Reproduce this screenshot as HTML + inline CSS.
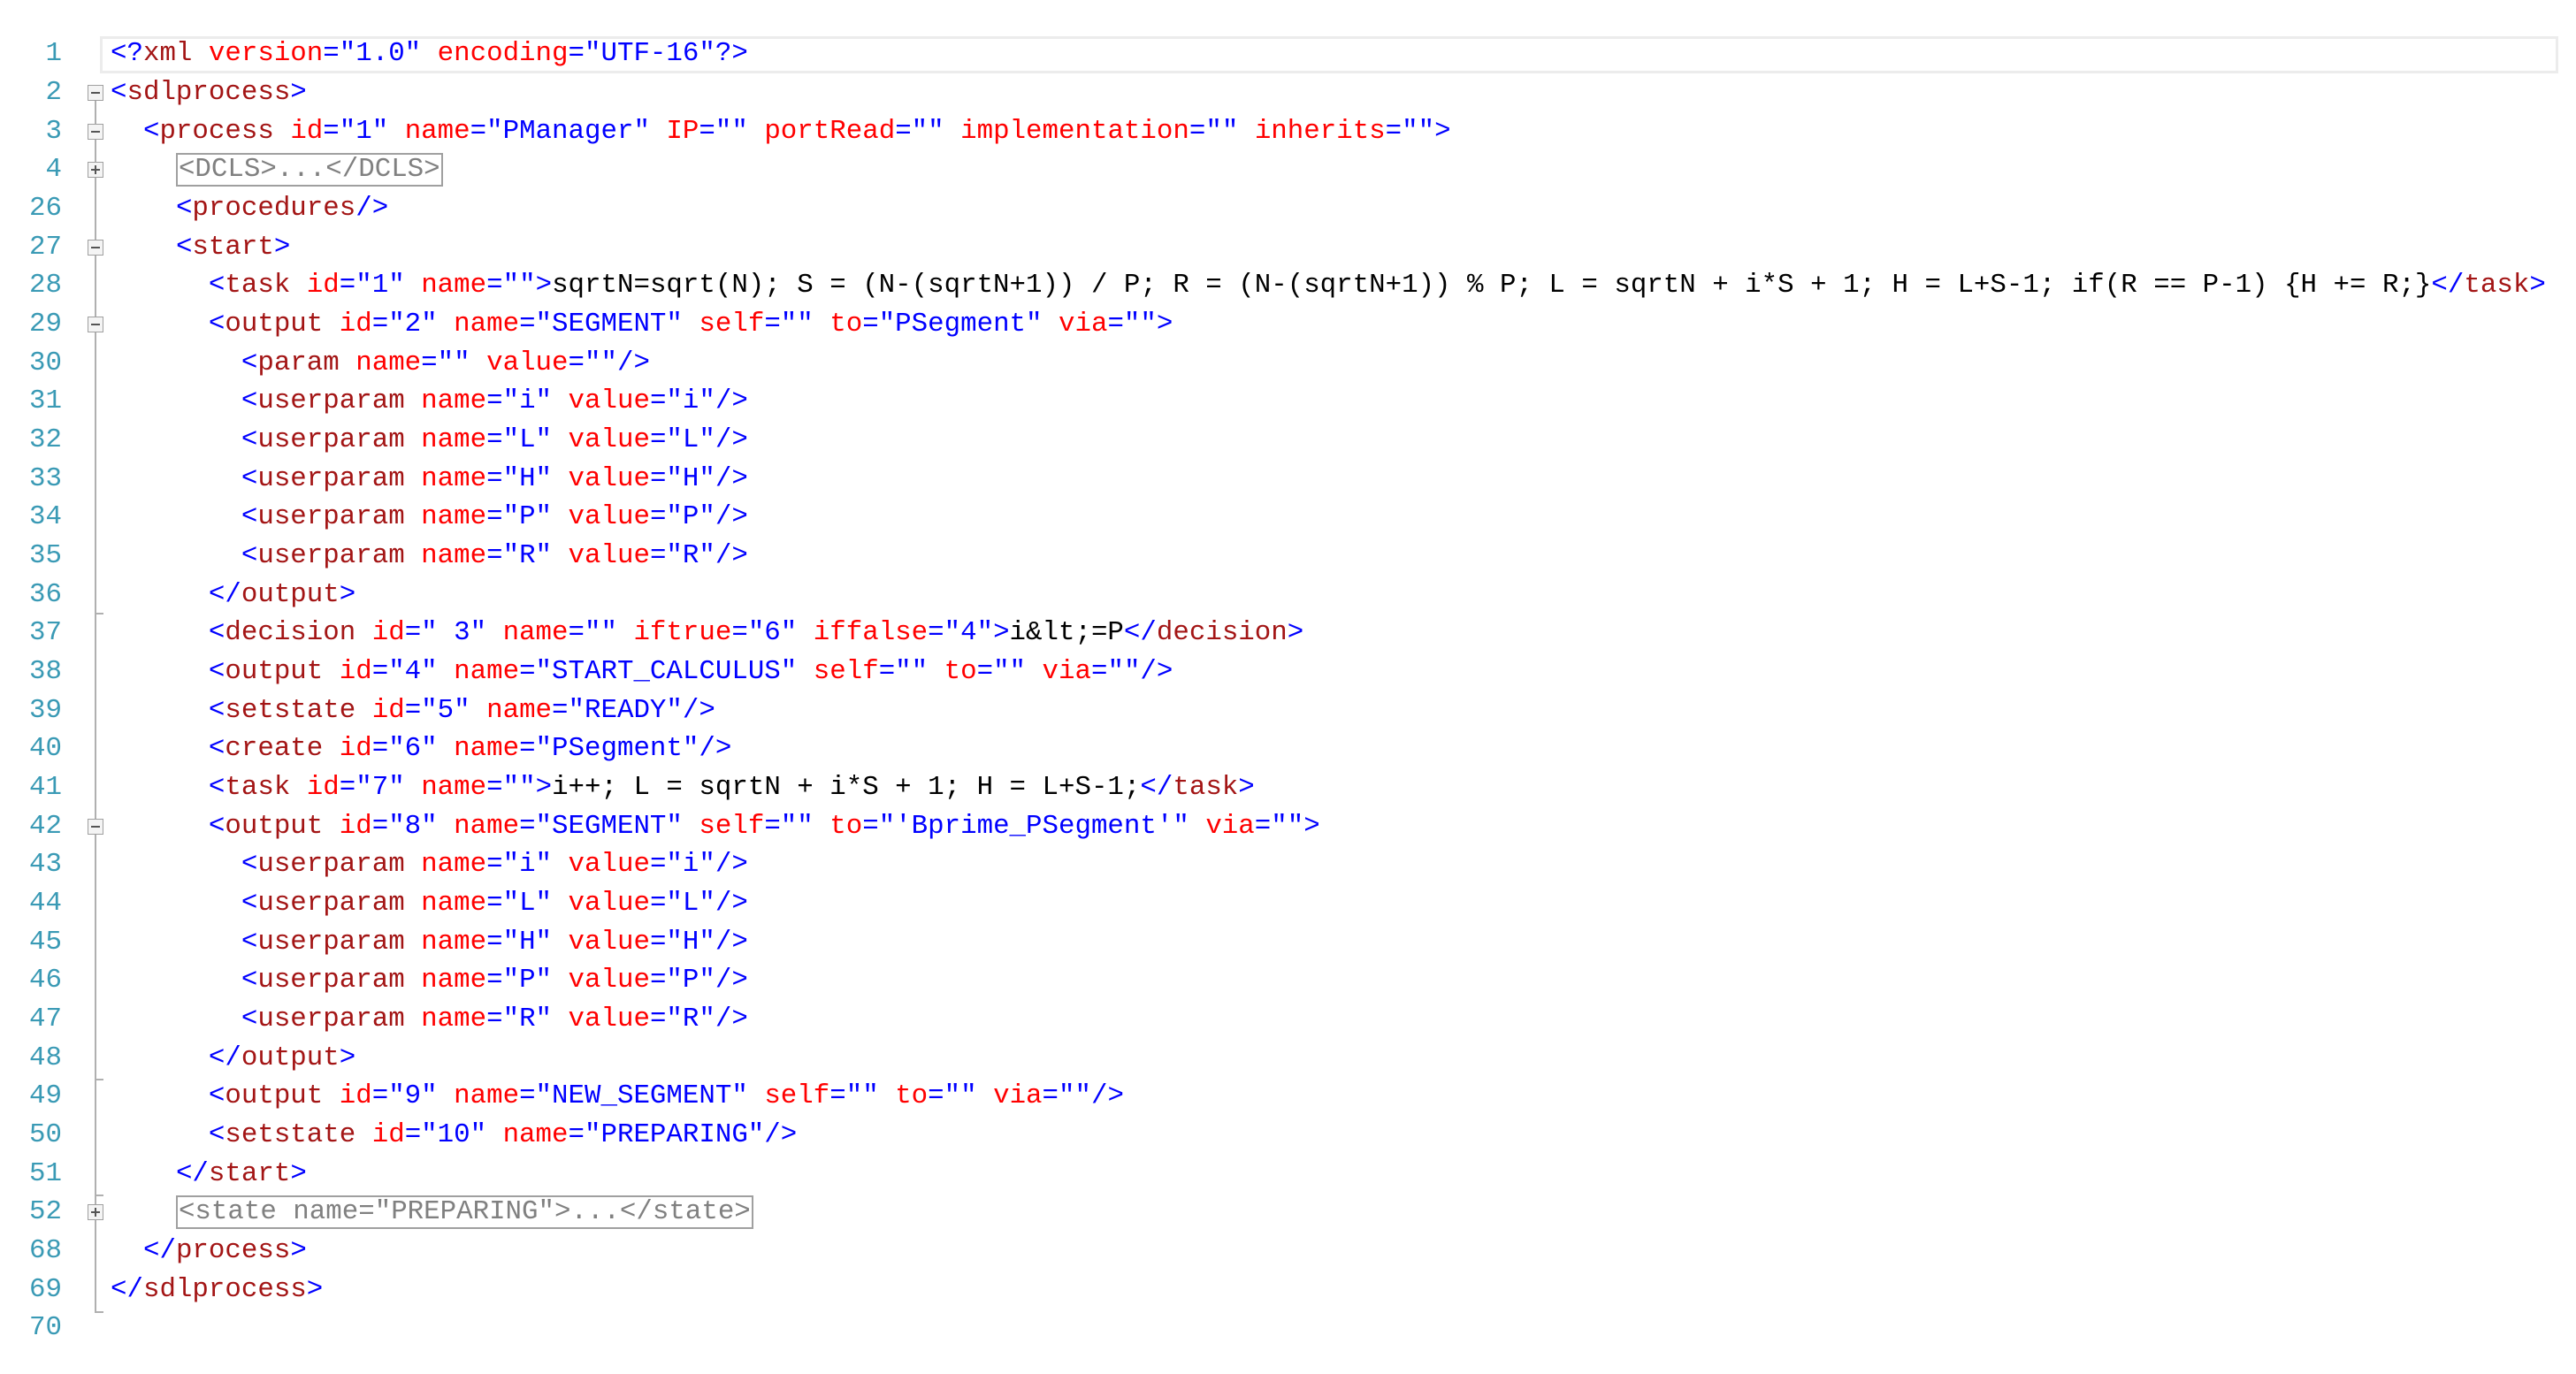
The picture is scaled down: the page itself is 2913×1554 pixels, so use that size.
<!DOCTYPE html>
<html><head><meta charset="utf-8">
<style>
html,body{margin:0;padding:0;background:#fff;}
body{width:2913px;height:1551px;position:relative;overflow:hidden;font-family:"Liberation Mono",monospace;font-size:30.8px;}
.wrap{position:absolute;left:0;top:3px;width:2913px;height:1551px;}
.row{position:absolute;left:0;height:44px;line-height:44px;width:2913px;}
.n{position:absolute;left:0;width:70px;text-align:right;color:#3a9ab5;}
.c{position:absolute;left:125px;white-space:pre;color:#000;}
.b{color:#0000ff}.e{color:#a31515}.a{color:#ff0000}.t{color:#000}
.col{color:#808080;border:2px solid #a0a0a0;padding:0 1px;line-height:34px;display:inline-block;}
.fold{position:absolute;left:99px;width:16px;height:16px;border:1px solid #a0a0a0;background:#f4f4f4;top:13px}
.fold:after{content:"";position:absolute;left:3px;right:3px;top:7px;height:2px;background:#555}
.fold.p:before{content:"";position:absolute;top:3px;bottom:3px;left:7px;width:2px;background:#555}
.gl{position:absolute;left:107px;width:2px;background:#b0b0b0;}
.hl{position:absolute;left:113px;top:38px;width:2780px;height:42px;border:3px solid #ececec;box-sizing:border-box;}
</style></head><body><div class="wrap">
<div class="hl"></div>
<div class="gl" style="top:110px;height:1370px"></div>
<div class="gl" style="top:690px;width:10px;height:2px"></div>
<div class="gl" style="top:1217px;width:10px;height:2px"></div>
<div class="gl" style="top:1348px;width:10px;height:2px"></div>
<div class="gl" style="top:1480px;width:10px;height:2px"></div>

<div class="row" style="top:36px"><span class="n">1</span><span class="c"><span class="b">&lt;?</span><span class="e">xml</span> <span class="a">version</span><span class="b">="1.0"</span> <span class="a">encoding</span><span class="b">="UTF-16"?&gt;</span></span></div>
<div class="row" style="top:80px"><span class="n">2</span><span class="fold"></span><span class="c"><span class="b">&lt;</span><span class="e">sdlprocess</span><span class="b">&gt;</span></span></div>
<div class="row" style="top:124px"><span class="n">3</span><span class="fold"></span><span class="c">  <span class="b">&lt;</span><span class="e">process</span> <span class="a">id</span><span class="b">="1"</span> <span class="a">name</span><span class="b">="PManager"</span> <span class="a">IP</span><span class="b">=""</span> <span class="a">portRead</span><span class="b">=""</span> <span class="a">implementation</span><span class="b">=""</span> <span class="a">inherits</span><span class="b">=""&gt;</span></span></div>
<div class="row" style="top:167px"><span class="n">4</span><span class="fold p"></span><span class="c">    <span class="col">&lt;DCLS&gt;...&lt;/DCLS&gt;</span></span></div>
<div class="row" style="top:211px"><span class="n">26</span><span class="c">    <span class="b">&lt;</span><span class="e">procedures</span><span class="b">/&gt;</span></span></div>
<div class="row" style="top:255px"><span class="n">27</span><span class="fold"></span><span class="c">    <span class="b">&lt;</span><span class="e">start</span><span class="b">&gt;</span></span></div>
<div class="row" style="top:298px"><span class="n">28</span><span class="c">      <span class="b">&lt;</span><span class="e">task</span> <span class="a">id</span><span class="b">="1"</span> <span class="a">name</span><span class="b">=""&gt;</span>sqrtN=sqrt(N); S = (N-(sqrtN+1)) / P; R = (N-(sqrtN+1)) % P; L = sqrtN + i*S + 1; H = L+S-1; if(R == P-1) {H += R;}<span class="b">&lt;/</span><span class="e">task</span><span class="b">&gt;</span></span></div>
<div class="row" style="top:342px"><span class="n">29</span><span class="fold"></span><span class="c">      <span class="b">&lt;</span><span class="e">output</span> <span class="a">id</span><span class="b">="2"</span> <span class="a">name</span><span class="b">="SEGMENT"</span> <span class="a">self</span><span class="b">=""</span> <span class="a">to</span><span class="b">="PSegment"</span> <span class="a">via</span><span class="b">=""&gt;</span></span></div>
<div class="row" style="top:386px"><span class="n">30</span><span class="c">        <span class="b">&lt;</span><span class="e">param</span> <span class="a">name</span><span class="b">=""</span> <span class="a">value</span><span class="b">=""/&gt;</span></span></div>
<div class="row" style="top:429px"><span class="n">31</span><span class="c">        <span class="b">&lt;</span><span class="e">userparam</span> <span class="a">name</span><span class="b">="i"</span> <span class="a">value</span><span class="b">="i"/&gt;</span></span></div>
<div class="row" style="top:473px"><span class="n">32</span><span class="c">        <span class="b">&lt;</span><span class="e">userparam</span> <span class="a">name</span><span class="b">="L"</span> <span class="a">value</span><span class="b">="L"/&gt;</span></span></div>
<div class="row" style="top:517px"><span class="n">33</span><span class="c">        <span class="b">&lt;</span><span class="e">userparam</span> <span class="a">name</span><span class="b">="H"</span> <span class="a">value</span><span class="b">="H"/&gt;</span></span></div>
<div class="row" style="top:560px"><span class="n">34</span><span class="c">        <span class="b">&lt;</span><span class="e">userparam</span> <span class="a">name</span><span class="b">="P"</span> <span class="a">value</span><span class="b">="P"/&gt;</span></span></div>
<div class="row" style="top:604px"><span class="n">35</span><span class="c">        <span class="b">&lt;</span><span class="e">userparam</span> <span class="a">name</span><span class="b">="R"</span> <span class="a">value</span><span class="b">="R"/&gt;</span></span></div>
<div class="row" style="top:648px"><span class="n">36</span><span class="c">      <span class="b">&lt;/</span><span class="e">output</span><span class="b">&gt;</span></span></div>
<div class="row" style="top:691px"><span class="n">37</span><span class="c">      <span class="b">&lt;</span><span class="e">decision</span> <span class="a">id</span><span class="b">=" 3"</span> <span class="a">name</span><span class="b">=""</span> <span class="a">iftrue</span><span class="b">="6"</span> <span class="a">iffalse</span><span class="b">="4"&gt;</span>i&amp;lt;=P<span class="b">&lt;/</span><span class="e">decision</span><span class="b">&gt;</span></span></div>
<div class="row" style="top:735px"><span class="n">38</span><span class="c">      <span class="b">&lt;</span><span class="e">output</span> <span class="a">id</span><span class="b">="4"</span> <span class="a">name</span><span class="b">="START_CALCULUS"</span> <span class="a">self</span><span class="b">=""</span> <span class="a">to</span><span class="b">=""</span> <span class="a">via</span><span class="b">=""/&gt;</span></span></div>
<div class="row" style="top:779px"><span class="n">39</span><span class="c">      <span class="b">&lt;</span><span class="e">setstate</span> <span class="a">id</span><span class="b">="5"</span> <span class="a">name</span><span class="b">="READY"/&gt;</span></span></div>
<div class="row" style="top:822px"><span class="n">40</span><span class="c">      <span class="b">&lt;</span><span class="e">create</span> <span class="a">id</span><span class="b">="6"</span> <span class="a">name</span><span class="b">="PSegment"/&gt;</span></span></div>
<div class="row" style="top:866px"><span class="n">41</span><span class="c">      <span class="b">&lt;</span><span class="e">task</span> <span class="a">id</span><span class="b">="7"</span> <span class="a">name</span><span class="b">=""&gt;</span>i++; L = sqrtN + i*S + 1; H = L+S-1;<span class="b">&lt;/</span><span class="e">task</span><span class="b">&gt;</span></span></div>
<div class="row" style="top:910px"><span class="n">42</span><span class="fold"></span><span class="c">      <span class="b">&lt;</span><span class="e">output</span> <span class="a">id</span><span class="b">="8"</span> <span class="a">name</span><span class="b">="SEGMENT"</span> <span class="a">self</span><span class="b">=""</span> <span class="a">to</span><span class="b">="'Bprime_PSegment'"</span> <span class="a">via</span><span class="b">=""&gt;</span></span></div>
<div class="row" style="top:953px"><span class="n">43</span><span class="c">        <span class="b">&lt;</span><span class="e">userparam</span> <span class="a">name</span><span class="b">="i"</span> <span class="a">value</span><span class="b">="i"/&gt;</span></span></div>
<div class="row" style="top:997px"><span class="n">44</span><span class="c">        <span class="b">&lt;</span><span class="e">userparam</span> <span class="a">name</span><span class="b">="L"</span> <span class="a">value</span><span class="b">="L"/&gt;</span></span></div>
<div class="row" style="top:1041px"><span class="n">45</span><span class="c">        <span class="b">&lt;</span><span class="e">userparam</span> <span class="a">name</span><span class="b">="H"</span> <span class="a">value</span><span class="b">="H"/&gt;</span></span></div>
<div class="row" style="top:1084px"><span class="n">46</span><span class="c">        <span class="b">&lt;</span><span class="e">userparam</span> <span class="a">name</span><span class="b">="P"</span> <span class="a">value</span><span class="b">="P"/&gt;</span></span></div>
<div class="row" style="top:1128px"><span class="n">47</span><span class="c">        <span class="b">&lt;</span><span class="e">userparam</span> <span class="a">name</span><span class="b">="R"</span> <span class="a">value</span><span class="b">="R"/&gt;</span></span></div>
<div class="row" style="top:1172px"><span class="n">48</span><span class="c">      <span class="b">&lt;/</span><span class="e">output</span><span class="b">&gt;</span></span></div>
<div class="row" style="top:1215px"><span class="n">49</span><span class="c">      <span class="b">&lt;</span><span class="e">output</span> <span class="a">id</span><span class="b">="9"</span> <span class="a">name</span><span class="b">="NEW_SEGMENT"</span> <span class="a">self</span><span class="b">=""</span> <span class="a">to</span><span class="b">=""</span> <span class="a">via</span><span class="b">=""/&gt;</span></span></div>
<div class="row" style="top:1259px"><span class="n">50</span><span class="c">      <span class="b">&lt;</span><span class="e">setstate</span> <span class="a">id</span><span class="b">="10"</span> <span class="a">name</span><span class="b">="PREPARING"/&gt;</span></span></div>
<div class="row" style="top:1303px"><span class="n">51</span><span class="c">    <span class="b">&lt;/</span><span class="e">start</span><span class="b">&gt;</span></span></div>
<div class="row" style="top:1346px"><span class="n">52</span><span class="fold p"></span><span class="c">    <span class="col">&lt;state name="PREPARING"&gt;...&lt;/state&gt;</span></span></div>
<div class="row" style="top:1390px"><span class="n">68</span><span class="c">  <span class="b">&lt;/</span><span class="e">process</span><span class="b">&gt;</span></span></div>
<div class="row" style="top:1434px"><span class="n">69</span><span class="c"><span class="b">&lt;/</span><span class="e">sdlprocess</span><span class="b">&gt;</span></span></div>
<div class="row" style="top:1477px"><span class="n">70</span></div>
</div></body></html>
